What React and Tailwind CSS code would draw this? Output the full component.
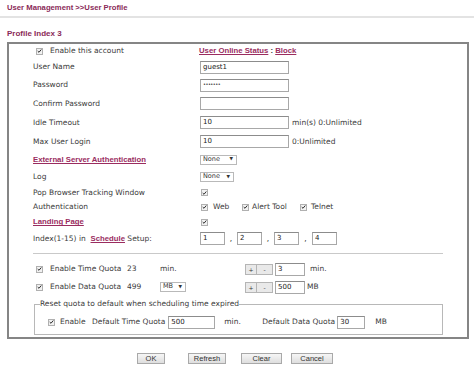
import React from "react";

const body = { fontFamily: '"DejaVu Sans", Verdana, sans-serif' };
const arial = { fontFamily: '"Liberation Sans", Arial, sans-serif' };

function Check() {
  return (
    <span className="inline-flex w-[7px] h-[7px] shrink-0 items-center justify-center border border-[#b0b0b0] bg-[#f1f1f1]">
      <svg viewBox="0 0 7 7" className="w-[6px] h-[6px]">
        <path d="M1 3.6 L2.8 5.3 L6 1.4" stroke="#2b2b2b" strokeWidth="1.4" fill="none" />
      </svg>
    </span>
  );
}

function Field({ className, children }) {
  return (
    <span className={"inline-flex shrink-0 items-center h-[13px] border border-[#a8a8a8] border-t-[#8c8c8c] bg-white pl-[2px] text-[7px] text-[#222] " + className}>
      {children}
    </span>
  );
}

function Select({ className, label }) {
  return (
    <span className={"inline-flex shrink-0 items-center justify-between h-[10px] border border-[#b9b9b9] bg-white pl-[2px] pr-[3px] text-[6.5px] text-[#333] " + className}>
      {label}
      <span className="text-[4.5px]">▼</span>
    </span>
  );
}

function Link({ children }) {
  return (
    <span className="font-bold underline text-[#9a2c5f] text-[7.75px]" style={arial}>
      {children}
    </span>
  );
}

function T({ className = "", children }) {
  return <span className={"whitespace-nowrap shrink-0 " + className}>{children}</span>;
}

function Row({ h, label, children }) {
  return (
    <div className={"flex items-center " + h}>
      <div className="w-[167px] shrink-0 whitespace-nowrap">{label}</div>
      <div className="flex items-center">{children}</div>
    </div>
  );
}

function Btn({ w, ml, children }) {
  return (
    <div
      className={"flex items-center justify-center h-[11px] border border-[#a9a9a9] bg-gradient-to-b from-[#f6f6f6] to-[#dedede] text-[7.5px] text-[#333] " + w + " " + ml}
      style={arial}
    >
      {children}
    </div>
  );
}

function PlusMinus({ ml = "" }) {
  return (
    <>
      <span className={"flex items-center justify-center w-[12px] h-[11px] border border-[#b5b5b5] bg-[#e9e9e9] text-[6px] " + ml}>+</span>
      <span className="flex items-center justify-center w-[16px] h-[11px] border border-l-0 border-[#b5b5b5] bg-[#e9e9e9] text-[6px]">-</span>
    </>
  );
}

export default function App() {
  return (
    <div className="w-[474px] h-[371px] bg-white text-[7.5px] text-[#3a3a3a] overflow-hidden" style={body}>
      <div className="h-[16px] flex items-center pl-[7px] font-bold text-[7.7px] text-[#8a2a58]" style={arial}>
        User Management &gt;&gt;User Profile
      </div>
      <div className="h-[2px] bg-[#e3e3e3]" />
      <div className="h-[24px] pt-[8px] flex items-center pl-[7px] font-bold text-[8px] text-[#8a2a58]" style={arial}>
        Profile Index 3
      </div>

      <div className="ml-[7px] w-[462px] border-2 border-[#858585] px-[24px]">
        <Row
          h="h-[14px]"
          label={
            <div className="flex items-center pl-[3px] gap-[7px]">
              <Check />
              <span>Enable this account</span>
            </div>
          }
        >
          <T className="-ml-[1px]">
            <Link>User Online Status</Link>
            <span className="font-bold text-[7.75px] text-[#333]" style={arial}>&nbsp;:&nbsp;</span>
            <Link>Block</Link>
          </T>
        </Row>
        <Row h="h-[18px]" label="User Name">
          <Field className="w-[89px]">guest1</Field>
        </Row>
        <Row h="h-[18px]" label="Password">
          <Field className="w-[89px]">
            <span className="text-[5px] tracking-[-0.5px]">•••••••</span>
          </Field>
        </Row>
        <Row h="h-[19px]" label="Confirm Password">
          <Field className="w-[89px]" />
        </Row>
        <Row h="h-[19px]" label="Idle Timeout">
          <Field className="w-[89px]">10</Field>
          <T className="ml-[3px]">min(s) 0:Unlimited</T>
        </Row>
        <Row h="h-[19px]" label="Max User Login">
          <Field className="w-[89px]">10</Field>
          <T className="ml-[3px]">0:Unlimited</T>
        </Row>
        <Row h="h-[17px]" label={<Link>External Server Authentication</Link>}>
          <Select className="w-[37px]" label="None" />
        </Row>
        <Row h="h-[18px]" label="Log">
          <Select className="w-[34px]" label="None" />
        </Row>
        <Row h="h-[13px]" label="Pop Browser Tracking Window">
          <span className="ml-[1px] flex items-center">
            <Check />
          </span>
        </Row>
        <Row h="h-[16px]" label="Authentication">
          <span className="ml-[1px] flex items-center">
            <Check />
          </span>
          <T className="ml-[5px] w-[29px]">Web</T>
          <Check />
          <T className="ml-[3px] w-[48px]">Alert Tool</T>
          <Check />
          <T className="ml-[4px]">Telnet</T>
        </Row>
        <Row h="h-[14px]" label={<Link>Landing Page</Link>}>
          <span className="ml-[1px] flex items-center">
            <Check />
          </span>
        </Row>
        <Row
          h="h-[19px]"
          label={
            <span>
              Index(1-15) in&nbsp; <Link>Schedule</Link> Setup:
            </span>
          }
        >
          <Field className="w-[25px] h-[12px]">1</Field>
          <T className="w-[12px] text-center">,</T>
          <Field className="w-[25px] h-[12px]">2</Field>
          <T className="w-[12px] text-center">,</T>
          <Field className="w-[25px] h-[12px]">3</Field>
          <T className="w-[13px] text-center">,</T>
          <Field className="w-[25px] h-[12px]">4</Field>
        </Row>

        <div className="mt-[5px] h-[1px] bg-[#c9c9c9]" />

        <div className="mt-[6px] h-[18px] flex items-center">
          <span className="ml-[3px] flex items-center">
            <Check />
          </span>
          <T className="ml-[7px] w-[77px]">Enable Time Quota</T>
          <T className="w-[33px]">23</T>
          <T className="w-[85px]">min.</T>
          <PlusMinus />
          <Field className="ml-[2px] w-[30px] h-[11px]">3</Field>
          <T className="ml-[5px]">min.</T>
        </div>
        <div className="h-[18px] flex items-center">
          <span className="ml-[3px] flex items-center">
            <Check />
          </span>
          <T className="ml-[7px] w-[77px]">Enable Data Quota</T>
          <T className="w-[33px]">499</T>
          <Select className="w-[26px]" label="MB" />
          <PlusMinus ml="ml-[59px]" />
          <Field className="ml-[2px] w-[30px] h-[11px]">500</Field>
          <T className="ml-[2px]">MB</T>
        </div>

        <fieldset className="mt-[3px] mb-[2px] ml-[1px] w-[409px] border border-[#b8b8b8] pl-[5px]">
          <legend className="leading-[10px] whitespace-nowrap">Reset quota to default when scheduling time expired</legend>
          <div className="pt-[5px] pb-[4px]">
            <div className="h-[16px] flex items-center">
              <span className="ml-[8px] flex items-center">
                <Check />
              </span>
              <T className="ml-[5px] w-[32px]">Enable</T>
              <T>Default Time Quota</T>
              <Field className="ml-[3px] w-[47px] h-[11px]">500</Field>
              <T className="ml-[9px] w-[38px]">min.</T>
              <T>Default Data Quota</T>
              <Field className="ml-[2px] w-[28px] h-[11px]">30</Field>
              <T className="ml-[10px]">MB</T>
            </div>
          </div>
        </fieldset>
      </div>

      <div className="mt-[14px] flex pl-[137px]">
        <Btn w="w-[28px]" ml="">OK</Btn>
        <Btn w="w-[38px]" ml="ml-[23px]">Refresh</Btn>
        <Btn w="w-[41px]" ml="ml-[15px]">Clear</Btn>
        <Btn w="w-[42px]" ml="ml-[9px]">Cancel</Btn>
      </div>
    </div>
  );
}
